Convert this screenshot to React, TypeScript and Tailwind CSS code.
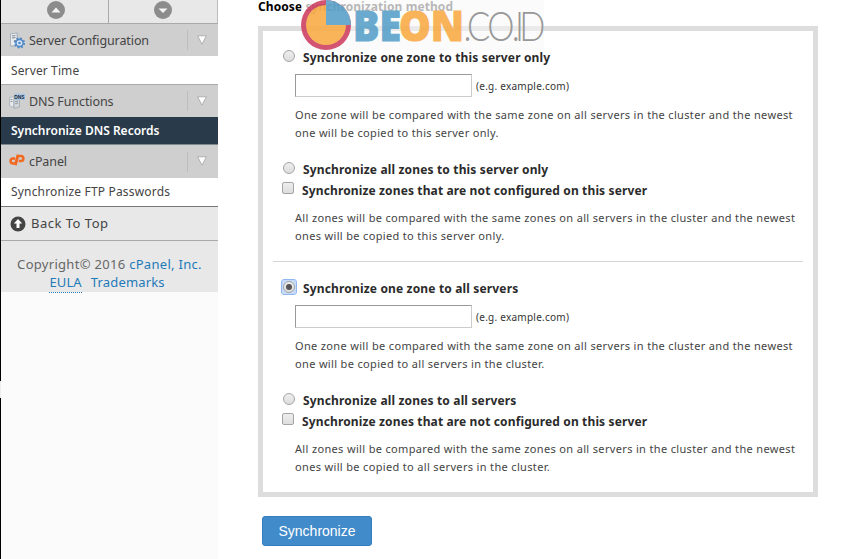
import { ReactNode } from "react";
import clsx from "clsx";

function ServerIcon() {
  return (
    <svg width="16" height="17" viewBox="0 0 16 17">
      <path d="M1 1.5 8.5.5 10.5 2v12L3 15.5 1 14z" fill="#c3c8ce" />
      <path d="M1.5 2 8 1v12.5L1.5 14z" fill="#e9ecef" stroke="#9aa2ac" strokeWidth=".7" />
      <path d="M3 4l3.5-.4M3 6l3.5-.4" stroke="#7d8793" />
      <circle cx="6" cy="9" r="1" fill="#6e7782" />
      <circle cx="10.5" cy="11" r="3.6" fill="#d9e8f8" stroke="#4f88c6" strokeWidth="1.6" />
      <circle cx="10.5" cy="11" r="4.8" fill="none" stroke="#4f88c6" strokeWidth="1.6" strokeDasharray="1.9 1.87" />
      <circle cx="10.5" cy="11" r="1.3" fill="#4f88c6" />
    </svg>
  );
}

function DnsIcon() {
  return (
    <svg width="16" height="16" viewBox="0 0 16 16">
      <path d="M.5 4.5 5 3.5v11L.5 13z" fill="#e4e7ea" stroke="#9aa2ac" strokeWidth=".6" />
      <path d="M5 6 10.5 5v9L5 15.5z" fill="#cfd4d9" stroke="#8f98a2" strokeWidth=".6" />
      <path d="M1.5 6.5h2M1.5 8.5h2M6.3 8.5l2.8-.5M6.3 10.5l2.8-.5" stroke="#7d8793" strokeWidth=".8" />
      <rect x="5" y=".5" width="11" height="6.5" fill="#a9c6e4" />
      <text x="5.3" y="5.8" fontSize="5.8" fontWeight="700" fontFamily="Liberation Sans, sans-serif" fill="#1c2733" textLength="10.2" lengthAdjust="spacingAndGlyphs">
        DNS
      </text>
    </svg>
  );
}

function CpanelIcon() {
  return (
    <svg className="-mt-[4px]" width="16" height="12" viewBox="0 0 16 12" fill="none" stroke="#f26a22" strokeWidth="2.5">
      <path d="M6 4.6H4a2.3 2.3 0 0 0 0 4.8h1.5q1 0 1.3-1.1L8.9.6" strokeLinejoin="round" />
      <path d="M6.5 11.2 8.6 3.2q.4-1.3 1.5-1.3h1.7a2.6 2.6 0 0 1 0 5.2H9.7" />
    </svg>
  );
}

function ScrollIcon({ down }: { down?: boolean }) {
  return (
    <svg width="18" height="18" viewBox="0 0 18 18">
      <circle cx="9" cy="9" r="9" fill="#8c8c8c" />
      <path d={down ? "M4.5 7.5h9L9 12z" : "M4.5 11.5h9L9 6.5z"} fill="#f4f4f4" />
    </svg>
  );
}

function Logo() {
  return (
    <svg
      className="absolute left-[301px] top-0"
      width="244"
      height="50"
      viewBox="0 0 244 50"
      fontFamily="'Open Sans', sans-serif"
    >
      <rect width="243" height="50" fill="#f7f7f7" opacity=".5" />
      <g opacity=".84">
        <circle cx="25" cy="25" r="25" fill="#cb3558" />
        <circle cx="25" cy="25" r="20" fill="#f9a63a" />
        <path d="M25 25V0a25 25 0 0 1 25 25z" fill="#4f9bc6" />
        <g fontSize="42" fontWeight="800" strokeWidth="1">
          <text x="52" y="41" textLength="48" lengthAdjust="spacingAndGlyphs" fill="#4f9bc6" stroke="#4f9bc6">BE</text>
          <text x="98" y="41" textLength="65" lengthAdjust="spacingAndGlyphs" fill="#f9a63a" stroke="#f9a63a">ON</text>
        </g>
      </g>
      <text
        transform="translate(160) scale(.82 1)"
        x="3 7.3 32 62 66 71"
        y="41"
        fontSize="42"
        fontWeight="300"
        fontFamily="Lato, sans-serif"
        fill="#989898"
      >
        .CO.ID
      </text>
    </svg>
  );
}

type GroupHeaderProps = {
  icon: ReactNode;
  label: string;
  className?: string;
};

function GroupHeader({ icon, label, className }: GroupHeaderProps) {
  return (
    <div className={clsx("flex items-center bg-[#cfcfcf] pl-2 text-[#444]", className)}>
      <span className="w-[20px]">{icon}</span>
      <span className="grow pt-[2px] text-[12.5px] tracking-[-0.1px]">{label}</span>
      <span className="flex h-5 w-[31px] items-center justify-center border-l border-[#bdbdbd] pr-[3px] pb-[1px]">
        <svg width="10" height="10" viewBox="0 0 10 10">
          <path d="M.7.8h8.6L5 9.2z" fill="#fff" stroke="#999" strokeWidth=".7" />
        </svg>
      </span>
    </div>
  );
}

function Sidebar() {
  return (
    <aside className="flex shrink-0">
      <div className="flex w-px flex-col">
        <div className="h-[381px] bg-black" />
        <div className="h-[17px] bg-[#eee]" />
        <div className="grow bg-black" />
      </div>
      <nav className="w-[217px] bg-[#fbfbfb] text-[13px] text-[#444]">
        <div className="flex h-[24px] border-b border-[#aaa] bg-[#e8e8e8]">
          <div className="flex w-[108px] justify-center border-r border-[#aaa] pt-[1px] pl-[2px]">
            <ScrollIcon />
          </div>
          <div className="flex grow justify-center border-r border-[#bbb] pt-[1px]">
            <ScrollIcon down />
          </div>
        </div>
        <GroupHeader icon={<ServerIcon />} label="Server Configuration" className="h-[32px]" />
        <a className="flex h-[28px] items-center bg-white pt-px pl-[10px] text-[12px] tracking-[0.12px]">Server Time</a>
        <GroupHeader icon={<DnsIcon />} label="DNS Functions" className="h-[33px] border-t border-[#aaa]" />
        <a className="flex h-[28px] items-center border-b border-[#7d8b91] bg-[#293a4a] pl-[10px] text-[12px] font-semibold text-white">
          Synchronize DNS Records
        </a>
        <GroupHeader icon={<CpanelIcon />} label="cPanel" className="h-[33px]" />
        <a className="flex h-[29px] items-center border-b border-[#777] bg-white pl-[10px] text-[12px] tracking-[0.18px]">
          Synchronize FTP Passwords
        </a>
        <a className="flex h-[34px] items-center border-b border-[#aaa] bg-[#e8e8e8] pl-[9px]">
          <svg width="16" height="16" viewBox="0 0 16 16">
            <circle cx="8" cy="8" r="7.5" fill="#444" />
            <path d="M8 3 3.8 7.4h2.7V12h3V7.4h2.7z" fill="#fff" />
          </svg>
          <span className="pl-[5px] tracking-[0.5px]">Back To Top</span>
        </a>
        <div className="h-[51px] bg-[#e8e8e8] pt-[14px] text-center leading-[18px] text-[#666]">
          <p className="whitespace-nowrap tracking-[0.3px]">
            Copyright© 2016 <a className="text-[#1f7ab8]">cPanel, Inc.</a>
          </p>
          <p className="flex justify-center gap-[9px] pr-[5px] tracking-[0.15px] text-[#1f7ab8]">
            <a className="h-[20px] border-b border-dotted border-[#1f7ab8]">EULA</a>
            <a>Trademarks</a>
          </p>
        </div>
      </nav>
    </aside>
  );
}

function Radio({ checked }: { checked?: boolean }) {
  return (
    <span className={clsx("-mt-[5px] -ml-px rounded-[2px] p-px", checked && "bg-[#c5dbf8] outline-1 outline-[#8fb8f2]")}>
      <span className="flex size-[12px] items-center justify-center rounded-full border border-[#a5a5a5] bg-linear-to-b from-[#eee] to-[#ddd]">
        {checked && <span className="size-[6px] rounded-full bg-[#555]" />}
      </span>
    </span>
  );
}

function Option({ label, checked, className }: { label: string; checked?: boolean; className?: string }) {
  return (
    <label
      className={clsx(
        "flex h-[18px] items-center pl-[20px] text-[12px] font-bold tracking-[0.16px] text-[#2b2b2b]",
        className
      )}
    >
      <Radio checked={checked} />
      <span className="pl-[7px]">{label}</span>
    </label>
  );
}

function Description({ lines }: { lines: string[] }) {
  return (
    <p className="mt-[9px] whitespace-nowrap pl-8 text-[11px] leading-[18px] tracking-[0.34px] text-[#444]">
      {lines.map((line) => (
        <span key={line} className="block">
          {line}
        </span>
      ))}
    </p>
  );
}

type SyncGroupProps = {
  target: string;
  scope: string;
  checked?: boolean;
  last?: boolean;
};

function SyncGroup({ target, scope, checked, last }: SyncGroupProps) {
  return (
    <section className="h-[231px] pt-[18px]">
      <Option label={`Synchronize one zone to ${target}`} checked={checked} />
      <div className="mt-[7px] flex h-[23px] items-center pl-8">
        <input className="h-[23px] w-[177px] border border-[#999] border-r-[#ccc] border-b-[#ccc] bg-white" />
        <span className="pl-1 pt-[2px] text-[10px] tracking-[0.25px] text-[#333]">(e.g. example.com)</span>
      </div>
      <Description
        lines={[
          "One zone will be compared with the same zone on all servers in the cluster and the newest",
          `one will be copied to ${scope}.`,
        ]}
      />
      <Option label={`Synchronize all zones to ${target}`} className="mt-[19px]" />
      <label className="mt-[3px] flex h-[18px] items-center pl-[19px] text-[12px] font-bold tracking-[0.13px] text-[#2b2b2b]">
        <span className="-mt-[6px] size-[12px] rounded-[2px] border border-[#a5a5a5] bg-linear-to-b from-[#eee] to-[#ddd]" />
        <span className="pl-[8px]">Synchronize zones that are not configured on this server</span>
      </label>
      <Description
        lines={[
          "All zones will be compared with the same zones on all servers in the cluster and the newest",
          `ones will be copied to ${scope}.`,
        ]}
      />
      {!last && <hr className="mx-[10px] mt-4 border-[#d5d5d5]" />}
    </section>
  );
}

export default function App() {
  return (
    <div className="relative flex h-[559px] w-[844px] overflow-hidden bg-white font-['Noto_Sans',sans-serif]">
      <Sidebar />
      <main className="pl-10">
        <h3 className="h-[26px] text-[12px] font-bold leading-[14px] tracking-[0.08px] text-black">
          Choose <span className="text-[#777]">synchronization method</span>
        </h3>
        <div className="h-[471px] w-[560px] border-[5px] border-[#ddd]">
          <SyncGroup target="this server only" scope="this server only" />
          <SyncGroup target="all servers" scope="all servers in the cluster" checked last />
        </div>
        <button className="ml-1 mt-[19px] h-[30px] w-[110px] rounded-[3px] border border-[#357ebd] bg-[#428bca] font-['Liberation_Sans',sans-serif] text-[14px] text-white">
          Synchronize
        </button>
      </main>
      <Logo />
    </div>
  );
}
